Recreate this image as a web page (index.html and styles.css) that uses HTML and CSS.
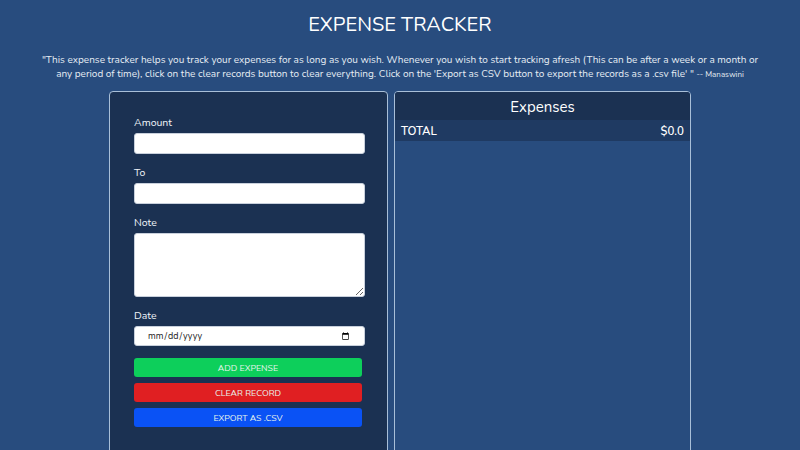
FILE: index.html
```html
<!DOCTYPE html>
<html>
<head>
<meta charset="utf-8">
<link rel="stylesheet" href="styles.css">
</head>
<body>
<h1 class="title">EXPENSE TRACKER</h1>
<p class="intro">"This expense tracker helps you track your expenses for as long as you wish. Whenever you wish to start tracking afresh (This can be after a week or a month or any period of time), click on the clear records button to clear everything. Click on the 'Export as CSV button to export the records as a .csv file' " <span class="author">-- Manaswini</span></p>
<div class="main">
  <div class="form-card">
    <label class="field-label">Amount</label>
    <input class="field-input" type="text">
    <label class="field-label">To</label>
    <input class="field-input" type="text">
    <label class="field-label">Note</label>
    <textarea class="field-area"></textarea>
    <label class="field-label">Date</label>
    <input class="field-input date" type="date">
    <button class="btn btn-add">ADD EXPENSE</button>
    <button class="btn btn-clear">CLEAR RECORD</button>
    <button class="btn btn-export">EXPORT AS .CSV</button>
  </div>
  <div class="list-card">
    <div class="list-head">Expenses</div>
    <div class="total-row"><span>TOTAL</span><span>$0.0</span></div>
  </div>
</div>
</body>
</html>
```
FILE: styles.css
```css
html, body {
  margin: 0;
  padding: 0;
  height: 100%;
  overflow: hidden;
}
body {
  background: #284c7e;
  color: #ffffff;
  font-family: "Nunito", "Lato", "Open Sans", sans-serif;
}
.title {
  margin: 11px 0 0;
  font-size: 20px;
  line-height: 28px;
  font-weight: 400;
  text-align: center;
}
.intro {
  margin: 14px 0 0;
  padding: 0 36px;
  font-size: 10px;
  line-height: 14px;
  text-align: center;
  color: #e6ecf4;
}
.author {
  font-size: 8px;
}
.main {
  display: flex;
  justify-content: center;
  gap: 6px;
  margin-top: 9px;
}
.form-card {
  width: 279px;
  height: 400px;
  box-sizing: border-box;
  background: #1b3152;
  border: 1px solid #a9bfd8;
  border-radius: 4px;
  padding: 24px 22px 0 24px;
  display: flex;
  flex-direction: column;
}
.field-label {
  font-size: 10.5px;
  line-height: 14px;
  margin-bottom: 3px;
  color: #f0f4f8;
}
.field-input {
  height: 21px;
  box-sizing: border-box;
  border: 1px solid #c8d0dc;
  border-radius: 3px;
  background: #fff;
  margin: 0 0 12px;
  padding: 0 12px;
  font-family: inherit;
  font-size: 10px;
}
.field-area {
  height: 64px;
  box-sizing: border-box;
  border: 1px solid #c8d0dc;
  border-radius: 3px;
  background: #fff;
  margin: 0 0 12px;
  resize: vertical;
}
.date {
  height: 20px;
  margin-bottom: 12px;
  color: #222;
  font-size: 9px;
}
.btn {
  width: 228px;
  height: 19px;
  border: none;
  border-radius: 3px;
  color: #e8f4ec;
  font-family: inherit;
  font-size: 8.8px;
  padding: 0;
  margin-bottom: 6px;
}
.btn-add { background: #0dcf5b; }
.btn-clear { background: #e01f22; }
.btn-export { background: #0a52f5; }
.list-card {
  width: 297px;
  height: 400px;
  box-sizing: border-box;
  border: 1px solid #a9bfd8;
  border-radius: 4px;
  overflow: hidden;
}
.list-head {
  background: #1b3152;
  height: 28px;
  line-height: 30px;
  text-align: center;
  font-size: 15px;
}
.total-row {
  background: #1f3a62;
  height: 21px;
  display: flex;
  justify-content: space-between;
  align-items: center;
  padding: 0 6px;
  font-size: 11.5px;
  font-weight: 600;
}
```
